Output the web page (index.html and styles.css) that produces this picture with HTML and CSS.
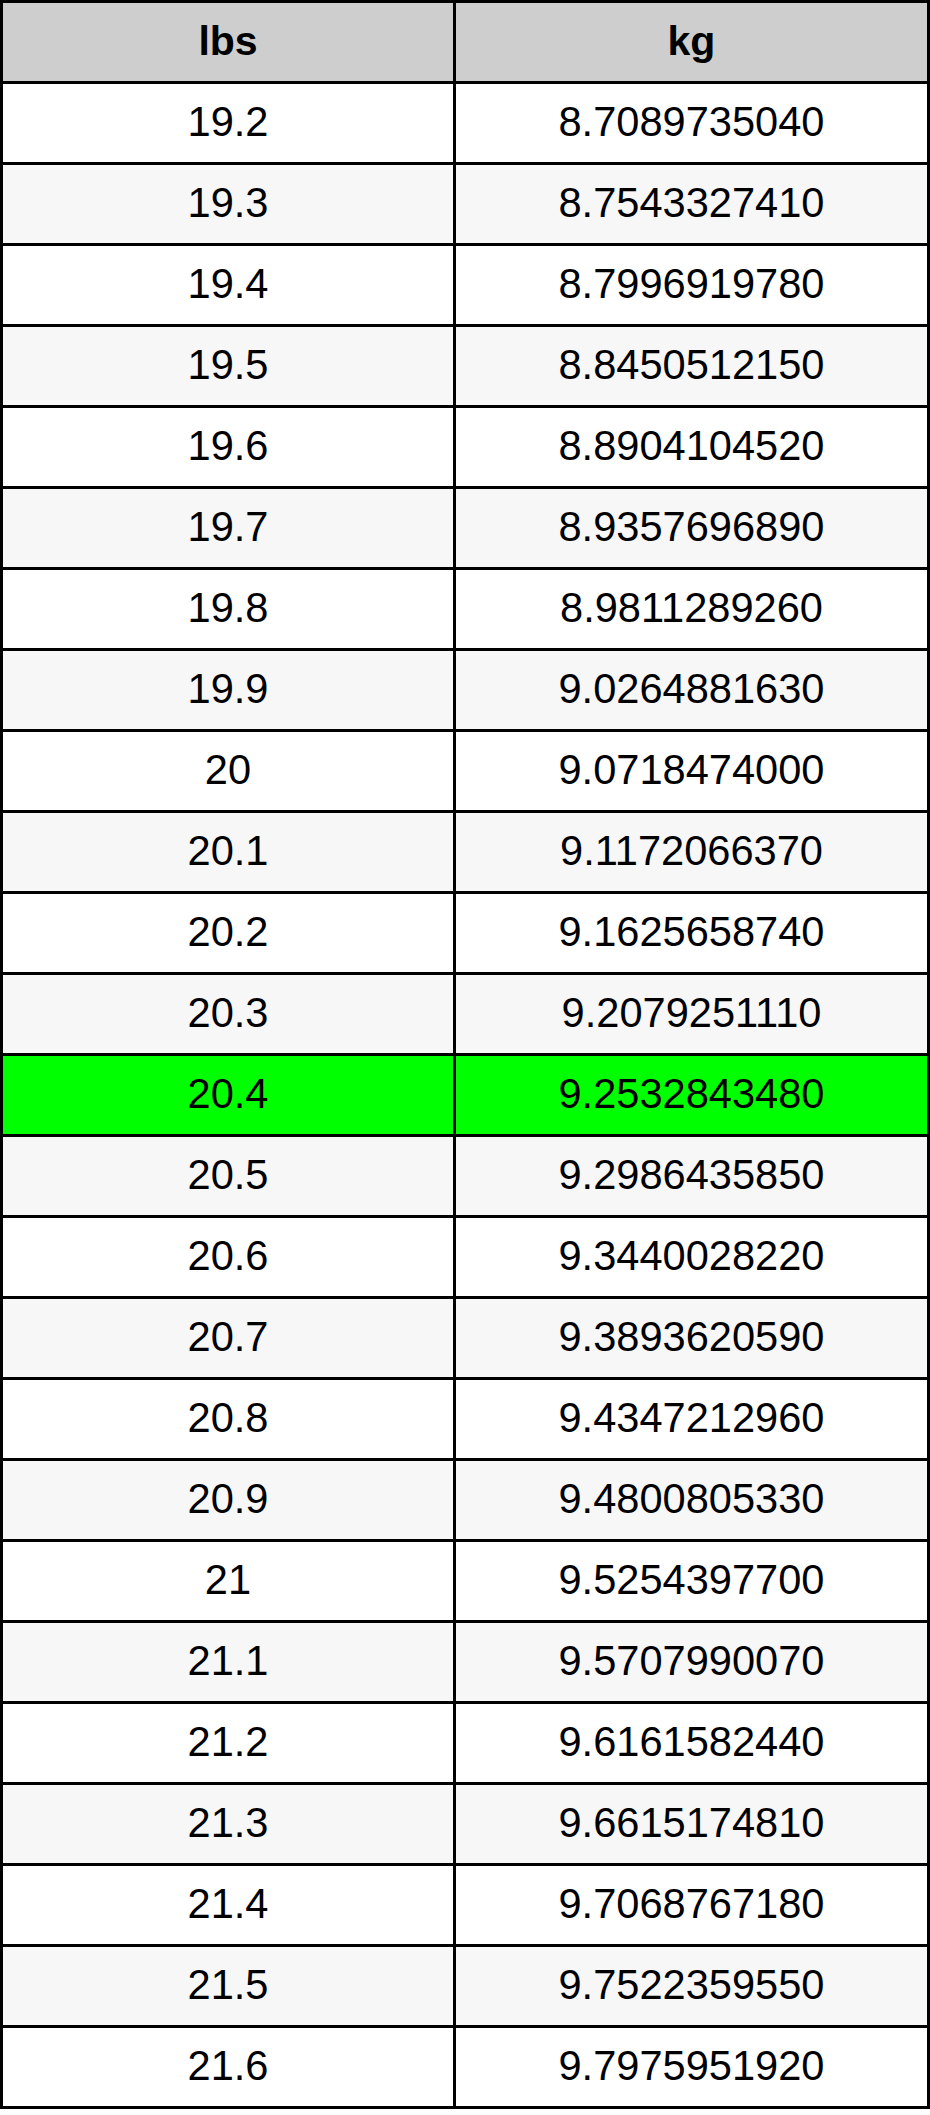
FILE: index.html
```html
<!DOCTYPE html>
<html>
<head>
<meta charset="utf-8">
<title>lbs to kg</title>
<link rel="stylesheet" href="styles.css">
</head>
<body>
<div class="table">
  <div class="row head"><div class="cell">lbs</div><div class="cell">kg</div></div>
  <div class="row"><div class="cell">19.2</div><div class="cell">8.7089735040</div></div>
  <div class="row alt"><div class="cell">19.3</div><div class="cell">8.7543327410</div></div>
  <div class="row"><div class="cell">19.4</div><div class="cell">8.7996919780</div></div>
  <div class="row alt"><div class="cell">19.5</div><div class="cell">8.8450512150</div></div>
  <div class="row"><div class="cell">19.6</div><div class="cell">8.8904104520</div></div>
  <div class="row alt"><div class="cell">19.7</div><div class="cell">8.9357696890</div></div>
  <div class="row"><div class="cell">19.8</div><div class="cell">8.9811289260</div></div>
  <div class="row alt"><div class="cell">19.9</div><div class="cell">9.0264881630</div></div>
  <div class="row"><div class="cell">20</div><div class="cell">9.0718474000</div></div>
  <div class="row alt"><div class="cell">20.1</div><div class="cell">9.1172066370</div></div>
  <div class="row"><div class="cell">20.2</div><div class="cell">9.1625658740</div></div>
  <div class="row alt"><div class="cell">20.3</div><div class="cell">9.2079251110</div></div>
  <div class="row hl"><div class="cell">20.4</div><div class="cell">9.2532843480</div></div>
  <div class="row alt"><div class="cell">20.5</div><div class="cell">9.2986435850</div></div>
  <div class="row"><div class="cell">20.6</div><div class="cell">9.3440028220</div></div>
  <div class="row alt"><div class="cell">20.7</div><div class="cell">9.3893620590</div></div>
  <div class="row"><div class="cell">20.8</div><div class="cell">9.4347212960</div></div>
  <div class="row alt"><div class="cell">20.9</div><div class="cell">9.4800805330</div></div>
  <div class="row"><div class="cell">21</div><div class="cell">9.5254397700</div></div>
  <div class="row alt"><div class="cell">21.1</div><div class="cell">9.5707990070</div></div>
  <div class="row"><div class="cell">21.2</div><div class="cell">9.6161582440</div></div>
  <div class="row alt"><div class="cell">21.3</div><div class="cell">9.6615174810</div></div>
  <div class="row"><div class="cell">21.4</div><div class="cell">9.7068767180</div></div>
  <div class="row alt"><div class="cell">21.5</div><div class="cell">9.7522359550</div></div>
  <div class="row"><div class="cell">21.6</div><div class="cell">9.7975951920</div></div>
</div>
</body>
</html>
```
FILE: styles.css
```css
html, body {
  margin: 0;
  padding: 0;
  background: #ffffff;
}
body {
  font-family: "Liberation Sans", Arial, sans-serif;
  color: #000000;
}
.table {
  width: 930px;
  box-sizing: border-box;
  background: #000000;
  padding: 3px;
  display: flex;
  flex-direction: column;
  gap: 3px;
}
.row {
  display: grid;
  grid-template-columns: 450px 471px;
  column-gap: 3px;
  height: 78px;
}
.cell {
  background: #ffffff;
  display: flex;
  align-items: center;
  justify-content: center;
  font-size: 41.6px;
  line-height: 1;
  padding-bottom: 2px;
  box-sizing: border-box;
}
.row.alt .cell {
  background: #f7f7f7;
}
.row.head .cell {
  background: #cecece;
  font-weight: bold;
  font-size: 41px;
}
.row.hl .cell {
  background: #00ff00;
}
```
